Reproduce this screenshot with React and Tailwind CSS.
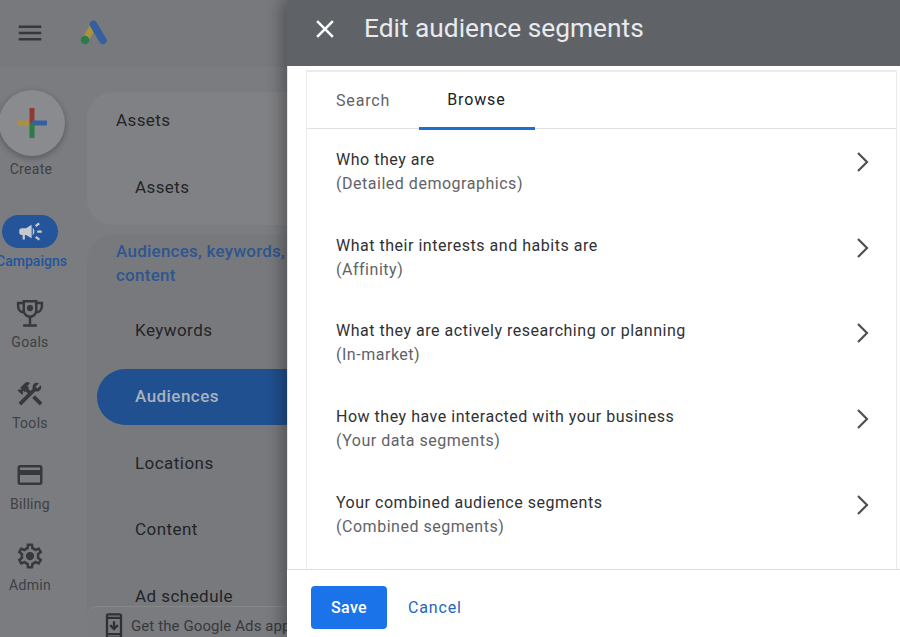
import React from 'react';
import { MdCampaign, MdCreditCard, MdConstruction, MdClose, MdMenu, MdOutlineSecurityUpdate } from 'react-icons/md';

const font = { fontFamily: 'Roboto, sans-serif' };

const AdsLogo = () => (
  <svg width="28" height="26" viewBox="0 0 28 26">
    <path d="M14 5 L5 20" stroke="#a8923e" strokeWidth="7" strokeLinecap="round" />
    <path d="M13.5 4.5 L23 20.5" stroke="#34609f" strokeWidth="7.5" strokeLinecap="round" />
    <circle cx="5" cy="20" r="4.3" fill="#2e7a48" />
  </svg>
);

const PlusLogo = () => (
  <svg width="30" height="30" viewBox="0 0 30 30">
    <rect x="0" y="12.5" width="15" height="5" fill="#a8923e" />
    <rect x="12.5" y="0" width="5" height="15" fill="#8f3a34" />
    <rect x="15" y="12.5" width="15" height="5" fill="#34609f" />
    <rect x="12.5" y="15" width="5" height="15" fill="#2e7a48" />
  </svg>
);

const TrophyIcon = ({ className }) => (
  <svg viewBox="0 0 24 24" className={className} fill="none" stroke="currentColor" strokeWidth="2">
    <path d="M7 2.5 H17 V10 A5 5 0 0 1 7 10 Z" />
    <path d="M7 4 H2.5 V6.5 A5 5 0 0 0 7 11.5" />
    <path d="M17 4 H21.5 V6.5 A5 5 0 0 1 17 11.5" />
    <path d="M12 15 V21" />
    <path d="M6.5 22 H17.5" />
    <circle cx="12" cy="8" r="2.5" fill="currentColor" stroke="none" />
  </svg>
);

const GearIcon = ({ className }) => (
  <svg viewBox="0 0 24 24" className={className} fill="currentColor">
    <path d="M19.43 12.98c.04-.32.07-.64.07-.98 0-.34-.03-.66-.07-.98l2.11-1.65c.19-.15.24-.42.12-.64l-2-3.46c-.09-.16-.26-.25-.44-.25-.06 0-.12.01-.17.03l-2.49 1c-.52-.4-1.08-.73-1.69-.98l-.38-2.65C14.46 2.18 14.25 2 14 2h-4c-.25 0-.46.18-.49.42l-.38 2.65c-.61.25-1.17.59-1.69.98l-2.49-1c-.06-.02-.12-.03-.18-.03-.17 0-.34.09-.43.25l-2 3.46c-.13.22-.07.49.12.64l2.11 1.65c-.04.32-.07.65-.07.98 0 .33.03.66.07.98l-2.11 1.65c-.19.15-.24.42-.12.64l2 3.46c.09.16.26.25.44.25.06 0 .12-.01.17-.03l2.49-1c.52.4 1.08.73 1.69.98l.38 2.65c.03.24.24.42.49.42h4c.25 0 .46-.18.49-.42l.38-2.65c.61-.25 1.17-.59 1.69-.98l2.49 1c.06.02.12.03.18.03.17 0 .34-.09.43-.25l2-3.46c.12-.22.07-.49-.12-.64l-2.11-1.65zm-1.98-1.71c.04.31.05.52.05.73 0 .21-.02.43-.05.73l-.14 1.13.89.7 1.08.84-.7 1.21-1.27-.51-1.04-.42-.9.68c-.43.32-.84.56-1.25.73l-1.06.43-.16 1.13-.2 1.35h-1.4l-.19-1.35-.16-1.13-1.06-.43c-.43-.18-.83-.41-1.23-.71l-.91-.7-1.06.43-1.27.51-.7-1.21 1.08-.84.89-.7-.14-1.13c-.03-.31-.05-.54-.05-.74s.02-.43.05-.73l.14-1.13-.89-.7-1.08-.84.7-1.21 1.27.51 1.04.42.9-.68c.43-.32.84-.56 1.25-.73l1.06-.43.16-1.13.2-1.35h1.39l.19 1.35.16 1.13 1.06.43c.43.18.83.41 1.23.71l.91.7 1.06-.43 1.27-.51.7 1.21-1.07.85-.89.7.14 1.13z" />
    <circle cx="12" cy="12" r="3.3" />
  </svg>
);

const railItems = [
  { label: 'Goals', icon: TrophyIcon },
  { label: 'Tools', icon: MdConstruction },
  { label: 'Billing', icon: MdCreditCard },
  { label: 'Admin', icon: GearIcon },
];

const navItems = ['Keywords', 'Audiences', 'Locations', 'Content', 'Ad schedule'];

const rows = [
  ['Who they are', '(Detailed demographics)'],
  ['What their interests and habits are', '(Affinity)'],
  ['What they are actively researching or planning', '(In-market)'],
  ['How they have interacted with your business', '(Your data segments)'],
  ['Your combined audience segments', '(Combined segments)'],
];

const Rail = () => (
  <div className="w-[87px] shrink-0 flex flex-col items-start overflow-hidden">
    <div className="w-[66px] h-[66px] -ml-[1px] mt-[23px] shrink-0 rounded-full bg-[#8a8b8e] shadow-[0_2px_6px_rgba(0,0,0,0.3)] flex items-center justify-center">
      <PlusLogo />
    </div>
    <div className="w-[62px] text-center text-sm leading-5 tracking-[0.3px] text-[#3e4043] mt-[3px]">Create</div>
    <div className="w-[56px] h-[33px] ml-[2px] mt-[36px] shrink-0 rounded-full bg-[#24559b] flex items-center justify-center">
      <MdCampaign className="text-[#c5c9d0] text-[27px]" />
    </div>
    <div className="w-[63px] flex justify-center text-sm leading-5 font-medium text-[#24559b] mt-[3px] mb-[9px] whitespace-nowrap">Campaigns</div>
    {railItems.map(({ label, icon: Icon }) => (
      <div key={label} className="w-[60px] h-[81px] shrink-0 flex flex-col items-center pt-[18px]">
        <Icon className="text-[#36383b] w-[30px] h-[30px]" />
        <div className="text-sm leading-5 tracking-[0.3px] text-[#3e4043] mt-[4px]">{label}</div>
      </div>
    ))}
  </div>
);

const NavColumn = () => (
  <div className="flex-1 min-w-0 relative overflow-hidden">
    <div className="h-[133px] mt-[25px] rounded-l-[26px] bg-[#808184] pl-[29px] text-[17px] tracking-[0.4px] text-[#232426]">
      <div className="h-[58px] flex items-center">Assets</div>
      <div className="h-[76px] flex items-center pl-[19px]">Assets</div>
    </div>
    <div className="mt-[10px] rounded-tl-[26px] bg-[#77797d] h-[400px]">
      <div className="pl-[29px] pt-[4px] text-[17px] leading-[24px] font-medium tracking-[0.25px] text-[#2f5590] whitespace-nowrap">Audiences, keywords,<br />content</div>
      <div className="mt-[10px] flex flex-col pl-[10px]">
        {navItems.map((item) => (
          <div
            key={item}
            className={item === 'Audiences'
              ? 'h-[56.6px] my-[5px] rounded-l-full bg-[#20508f] pl-[38px] flex items-center text-[17px] tracking-[0.45px] font-medium text-[#a9b2bf]'
              : 'h-[56.6px] my-[5px] pl-[38px] flex items-center text-[17px] tracking-[0.45px] text-[#232426]'}
          >
            {item}
          </div>
        ))}
      </div>
    </div>
    <div className="absolute bottom-0 left-0 right-0 h-[31px] bg-[#797b7f] border-t border-[#86878a] rounded-tl-[10px] flex items-center pl-[13px] pt-[8px] text-[15px] tracking-[0.1px] text-[#37393c] whitespace-nowrap">
      <MdOutlineSecurityUpdate className="text-[28px] shrink-0 mr-[3px] text-[#2f3134]" />
      Get the Google Ads app
    </div>
  </div>
);

const BrowseRow = ({ title, sub }) => (
  <div className="h-[85.7px] shrink-0 pl-[29px] pr-[26px] pt-[19px] flex justify-between items-start">
    <div className="text-base leading-6 tracking-[0.52px]">
      <div className="text-[#303134]">{title}</div>
      <div className="text-[#5f6368]">{sub}</div>
    </div>
    <svg width="14" height="22" viewBox="0 0 14 22" className="mt-[3px]" fill="none" stroke="#4d5054" strokeWidth="2.2">
      <path d="M2 2 L11 11 L2 20" />
    </svg>
  </div>
);

const Panel = () => (
  <div className="flex-1 min-w-0 flex flex-col bg-white relative shadow-[-6px_0_14px_rgba(0,0,0,0.3)]">
    <div className="h-[66px] shrink-0 bg-[#5f6368] flex items-center pl-[23px] pb-[9px]">
      <MdClose className="text-white text-[30px]" />
      <div className="ml-[24px] text-[26.3px] text-[#e8eaed] whitespace-nowrap">Edit audience segments</div>
    </div>
    <div className="flex-1 min-h-0 pl-[18px] pr-[3px] pt-[4px] border-l border-[#e4e4e4]">
      <div className="h-full border-t-2 border-x border-[#ebebeb] overflow-hidden flex flex-col">
        <div className="h-[57px] shrink-0 flex border-b border-[#e0e0e0] text-base tracking-[0.85px]">
          <div className="px-[29px] flex items-center text-[#5f6368] pt-[1px]">Search</div>
          <div className="pl-[28px] pr-[30px] flex items-center text-[#202124] border-b-[3px] border-[#1f6fd0] h-[58px] pt-[1px]">Browse</div>
        </div>
        {rows.map(([title, sub]) => (
          <BrowseRow key={title} title={title} sub={sub} />
        ))}
      </div>
    </div>
    <div className="h-[68px] shrink-0 border-t border-[#e0e0e0] flex items-center pl-[24px] pt-[8px]">
      <button className="w-[76px] h-[43px] rounded bg-[#1a73e8] text-white text-base font-medium tracking-[0.4px]">Save</button>
      <button className="ml-[21px] text-base tracking-[0.85px] text-[#1f66c1]">Cancel</button>
    </div>
  </div>
);

const App = () => {
  return (
    <div className="w-[900px] h-[637px] flex overflow-hidden bg-white" style={font}>
      <div className="w-[287px] shrink-0 flex flex-col bg-[#7a7c80]">
        <div className="h-[67px] shrink-0 flex items-center pl-[15px] pb-[2px] bg-[#77797d]">
          <MdMenu className="text-[#36383b] text-[30px]" />
          <div className="ml-[35px]"><AdsLogo /></div>
        </div>
        <div className="flex-1 min-h-0 flex">
          <Rail />
          <NavColumn />
        </div>
      </div>
      <Panel />
    </div>
  );
};

export default App;
